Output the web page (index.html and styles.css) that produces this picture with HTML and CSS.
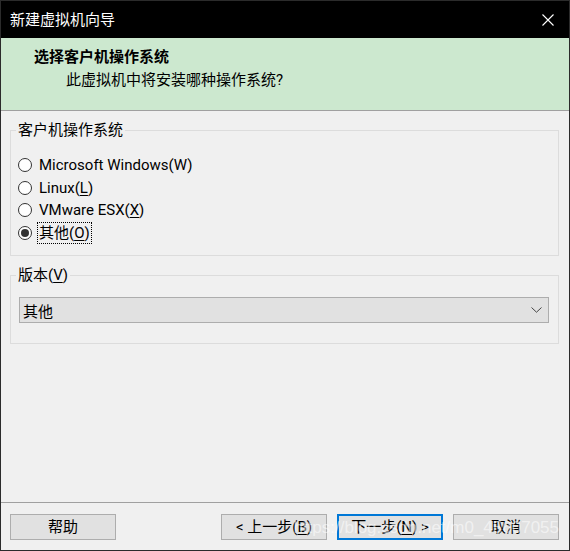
FILE: index.html
```html
<!DOCTYPE html>
<html lang="zh-CN">
<head>
  <meta charset="UTF-8" />
  <title>新建虚拟机向导</title>
  <link rel="stylesheet" href="styles.css">
</head>
<body>
  <div class="window">
    <div class="titlebar">
      <span class="title">新建虚拟机向导</span>
      <svg class="close" width="12" height="12" viewBox="0 0 12 12">
        <path d="M0.5 0.5 L11.5 11.5 M11.5 0.5 L0.5 11.5" stroke="#fff" stroke-width="1.1" fill="none"/>
      </svg>
    </div>

    <div class="header">
      <h1>选择客户机操作系统</h1>
      <p>此虚拟机中将安装哪种操作系统?</p>
    </div>

    <div class="content">
      <div class="group group-os">
        <div class="group-title">客户机操作系统</div>
        <div class="radios">
          <label class="radio"><span class="dot"></span><span class="lbl">Microsoft Windows(W)</span></label>
          <label class="radio"><span class="dot"></span><span class="lbl">Linux(<u>L</u>)</span></label>
          <label class="radio"><span class="dot"></span><span class="lbl">VMware ESX(<u>X</u>)</span></label>
          <label class="radio checked"><span class="dot"></span><span class="lbl focus">其他(<u>O</u>)</span></label>
        </div>
      </div>

      <div class="group group-ver">
        <div class="group-title">版本(<u>V</u>)</div>
        <div class="select">
          <span>其他</span>
          <svg width="11" height="6" viewBox="0 0 11 6">
            <path d="M0.5 0.5 L5.5 5.2 L10.5 0.5" stroke="#444" stroke-width="1" fill="none"/>
          </svg>
        </div>
      </div>
    </div>

    <div class="footer">
      <button class="btn">帮助</button>
      <div class="spacer"></div>
      <button class="btn">&lt; 上一步(<u>B</u>)</button>
      <button class="btn primary">下一步(<u>N</u>) &gt;</button>
      <button class="btn">取消</button>
    </div>

    <div class="watermark">https://blog.csdn.net/m0_45607055</div>
  </div>
</body>
</html>
```

FILE: styles.css
```css
* { margin: 0; padding: 0; box-sizing: border-box; }
html, body { width: 570px; height: 551px; overflow: hidden; background: #f0f0f0; }
body {
  font-family: Roboto, "Noto Sans CJK SC", sans-serif;
  font-size: 15px;
  color: #000;
}

.window {
  position: relative;
  width: 570px; height: 551px;
  border: 1px solid #2b2b2b;
  display: flex; flex-direction: column;
  background: #f0f0f0;
}

/* title bar */
.titlebar {
  height: 37px; background: #000; color: #fff;
  display: flex; align-items: center; justify-content: space-between;
  padding: 0 15px 0 9px;
}
.title { font-size: 15px; line-height: 20px; }
.close { display: block; }

/* header */
.header {
  height: 73px; background: #cce8cf;
  border-bottom: 1px solid #a0a0a0;
  padding: 9px 0 0 33px;
}
.header h1 { font-size: 15px; font-weight: bold; line-height: 20px; }
.header p { font-size: 15px; line-height: 20px; margin: 3px 0 0 32px; }

/* content */
.content { flex: 1; padding: 19px 10px 0 9px; }

.group { border: 1px solid #dcdcdc; }
.group-title {
  display: table;
  margin: -11px 0 0 5px;
  padding: 0 2px;
  line-height: 20px;
  background: #f0f0f0;
}
.group-os { height: 126px; }
.group-ver { margin-top: 19px; padding-bottom: 20px; }

.radios { padding: 14px 0 0 7px; }
.radio { display: flex; align-items: center; height: 22.5px; }
.dot {
  width: 14px; height: 14px; border-radius: 50%;
  border: 1px solid #333; background: #fff;
  margin-right: 5px; flex: none;
  display: flex; align-items: center; justify-content: center;
}
.radio.checked .dot::after {
  content: ""; width: 8px; height: 8px; border-radius: 50%; background: #333;
}
.lbl { line-height: 20px; padding: 0 1px; border: 1px solid transparent; }
.lbl.focus { border: 1px dotted #000; }
u { text-decoration-thickness: 1px; text-underline-offset: 2px; }

.select {
  height: 26px; margin: 12px 9px 0 8px;
  background: #e1e1e1; border: 1px solid #adadad;
  display: flex; align-items: center; justify-content: space-between;
  padding: 0 6px 0 3px;
}

/* footer */
.footer {
  border-top: 1px solid #a0a0a0;
  padding: 11px 10px 10px 9px;
  display: flex; gap: 10px;
}
.spacer { flex: 1; }
.btn {
  width: 106px; height: 26px;
  font: inherit; line-height: 20px; color: #000;
  background: #e1e1e1; border: 1px solid #adadad;
}
.btn.primary { border: 2px solid #0078d7; }

.watermark {
  position: absolute; right: 10px; bottom: 12px;
  font-family: "Liberation Sans", sans-serif;
  font-size: 17px; color: rgba(255, 255, 255, 0.55);
  pointer-events: none;
}
```
